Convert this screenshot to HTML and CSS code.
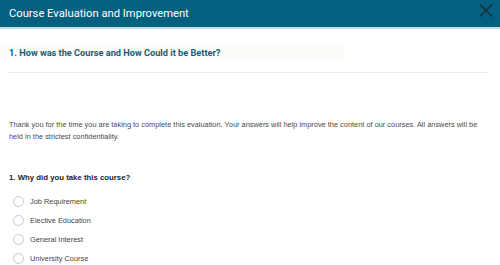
FILE: index.html
```html
<!DOCTYPE html>
<html lang="en">
<head>
    <meta charset="UTF-8">
    <title>Course Evaluation and Improvement</title>
    <link rel="stylesheet" href="styles.css">
</head>
<body>
    <div class="modal-header">
        <h2>Course Evaluation and Improvement</h2>
        <span class="close-btn">
            <svg width="14" height="13" viewBox="0 0 14 13"><path d="M1 0.5 L13 12.5 M13 0.5 L1 12.5" stroke="#1c2a33" stroke-width="1.4" fill="none"/></svg>
        </span>
    </div>

    <div class="modal-body">
        <div class="section-title"><span>1. How was the Course and How Could it be Better?</span></div>

        <p class="intro">Thank you for the time you are taking to complete this evaluation. Your answers will help improve the content of our courses. All answers will be held in the strictest confidentiality.</p>

        <div class="question">1. Why did you take this course?</div>
        <ul class="options">
            <li><span class="radio"></span>Job Requirement</li>
            <li><span class="radio"></span>Elective Education</li>
            <li><span class="radio"></span>General Interest</li>
            <li><span class="radio"></span>University Course</li>
        </ul>
    </div>
</body>
</html>
```

FILE: styles.css
```css
body {
    margin: 0;
    background: #fff;
    font-family: "Liberation Sans", Arial, sans-serif;
    overflow: hidden;
}
.modal-header {
    height: 27px;
    background: #04607f;
    border-bottom: 2px solid #c3dcea;
    display: flex;
    align-items: center;
    justify-content: space-between;
    padding: 0 7px 0 9px;
}
.modal-header h2 {
    margin: 0;
    color: #fff;
    font-family: Roboto, sans-serif;
    font-weight: 400;
    font-size: 11.2px;
}
.close-btn {
    display: flex;
    margin-top: -6px;
}
.modal-body {
    padding: 0 12px 0 9px;
}
.section-title {
    margin-top: 16px;
    height: 15px;
    background: #fcfcf9;
    width: 336px;
    margin-left: -9px;
    padding-left: 9px;
    display: flex;
    align-items: center;
    color: #1d5b70;
    font-family: Roboto, sans-serif;
    font-weight: 700;
    font-size: 9.2px;
}
.intro {
    margin: 0;
    padding-top: 46px;
    border-top: 1px solid #ecebe6;
    margin-top: 12px;
    margin-left: -1px;
    padding-left: 1px;
    font-size: 7.4px;
    line-height: 12px;
    color: #4a4a4a;
}
.question {
    margin-top: 30px;
    font-weight: 700;
    font-size: 7.8px;
    color: #222;
}
.options {
    list-style: none;
    margin: 10px 0 0;
    padding: 0;
}
.options li {
    height: 19px;
    display: flex;
    align-items: center;
    font-size: 7.4px;
    color: #444;
}
.radio {
    width: 9px;
    height: 9px;
    border: 1px solid #c9c9c4;
    border-radius: 50%;
    margin: 0 6px 0 4px;
}
```
